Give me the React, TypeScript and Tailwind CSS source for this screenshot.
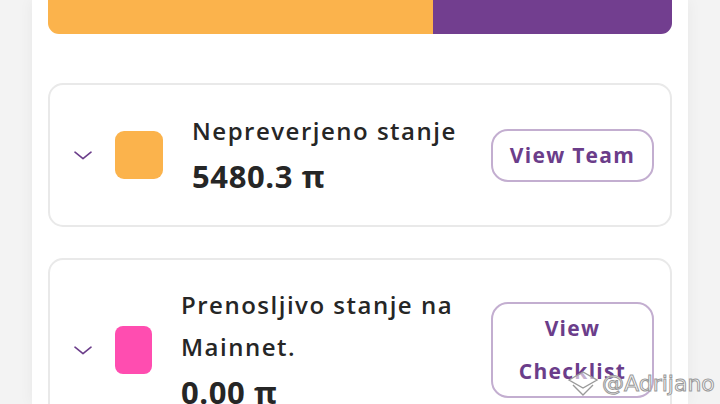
import React from "react";

function Chevron() {
  return (
    <svg width="18" height="9" viewBox="0 0 18 9" fill="none" className="shrink-0">
      <path d="M1 1.2 L9 7.6 L17 1.2" stroke="#6b3d8a" strokeWidth="1.6" strokeLinecap="round" strokeLinejoin="round" />
    </svg>
  );
}

export default function App() {
  return (
    <div className="relative w-[720px] h-[404px] overflow-hidden bg-[#f3f3f3] font-['Open_Sans',sans-serif]">
      <div className="mx-8 h-full bg-white shadow-[0_0_14px_rgba(0,0,0,0.05)] px-4 flex flex-col">
        <div className="mt-[-20px] h-[54px] rounded-[11px] overflow-hidden flex shrink-0">
          <div className="w-[385px] bg-[#fbb34c]" />
          <div className="flex-1 bg-[#723e8f]" />
        </div>

        <div className="mt-[49px] border-2 border-[#e9e9e9] rounded-[15px] flex items-center pl-6 pr-4 py-6 shrink-0">
          <Chevron />
          <div className="ml-[23px] w-12 h-12 rounded-[9px] bg-[#fbb34c] shrink-0" />
          <div className="ml-[29px] flex-1 flex flex-col text-[#262626]">
            <div className="text-[24px] leading-[43px] font-semibold tracking-[1.5px]">Nepreverjeno stanje</div>
            <div className="text-[31px] leading-[49px] font-bold tracking-[0.6px]">5480.3 π</div>
          </div>
          <div className="w-[163px] shrink-0 border-2 border-[#c3aed0] rounded-[17px] py-[3px] text-center text-[21px] leading-[43px] font-bold text-[#6b3d8a] tracking-[1.3px]">
            View Team
          </div>
        </div>

        <div className="mt-[31px] border-2 border-[#e9e9e9] rounded-[15px] flex items-center pl-6 pr-4 py-6 shrink-0">
          <Chevron />
          <div className="ml-[23px] w-[37px] h-12 rounded-[8px] bg-[#ff4db0] shrink-0" />
          <div className="ml-[29px] flex-1 flex flex-col text-[#262626] pr-1">
            <div className="text-[24px] leading-[42px] font-semibold tracking-[1.5px]">Prenosljivo stanje na Mainnet.</div>
            <div className="text-[31px] leading-[48px] font-bold tracking-[0.6px]">0.00 π</div>
          </div>
          <div className="w-[163px] shrink-0 border-2 border-[#c3aed0] rounded-[17px] py-[3px] px-6 text-center text-[21px] leading-[43px] font-bold text-[#6b3d8a] tracking-[1.3px]">
            View Checklist
          </div>
        </div>
      </div>

      <div className="absolute left-[566px] top-[370px] flex items-center gap-[2px]">
        <svg width="34" height="28" viewBox="0 0 34 28" fill="none">
          <path d="M3 10 L17 2 L31 10 L17 18 Z" stroke="#9a9a9a" strokeWidth="1.4" fill="rgba(255,255,255,0.6)" />
          <path d="M7 15 L17 25 L27 15" stroke="#9a9a9a" strokeWidth="1.4" fill="none" />
        </svg>
        <span className="text-[22px] leading-none text-white font-['DejaVu_Sans',sans-serif] [-webkit-text-stroke:1px_#9a9a9a]">@Adrijano</span>
      </div>
    </div>
  );
}
